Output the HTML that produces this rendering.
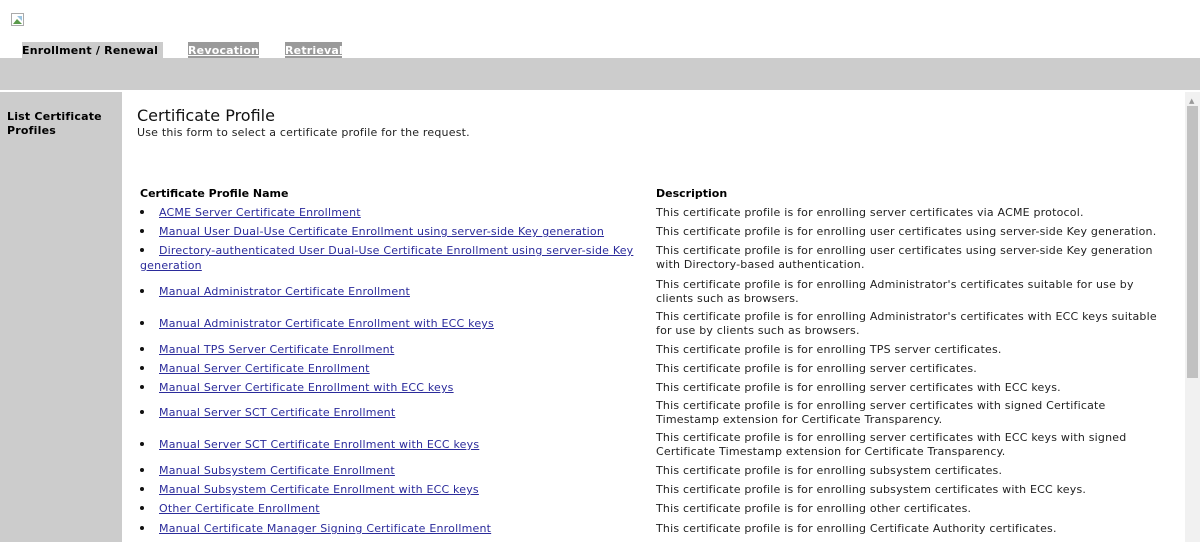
<!DOCTYPE html>
<html><head><meta charset="utf-8"><style>
*{margin:0;padding:0}
body{width:1200px;height:542px;overflow:hidden;background:#fff;font-family:"DejaVu Sans","Liberation Sans",sans-serif;font-size:11px;letter-spacing:0.2px;color:#222;position:relative}
.a{position:absolute;white-space:nowrap;line-height:13px}
a{color:#2b2b9b;text-decoration:underline}
.b{font-weight:bold;color:#000;letter-spacing:0}
.t{font-size:11px;letter-spacing:0.2px}
.dot{position:absolute;width:4px;height:4px;border-radius:50%;background:#111}
</style></head><body>
<svg class="a" style="left:11px;top:13px" width="14" height="14"><rect x="0.5" y="0.5" width="12" height="12" fill="#fff" stroke="#aaa"/><path d="M2 11 L6 6 L11 11Z" fill="#5a9a4a"/><path d="M6 3h5v5z" fill="#9bc4e0"/></svg>
<div class="a b t" style="left:22px;top:42px;width:141px;height:16px;background:#ccc;line-height:17px">Enrollment / Renewal</div>
<div class="a t" style="left:188px;top:42px;width:71px;height:16px;background:#9a9a9a;color:#fff;font-weight:bold;text-decoration:underline;line-height:17px;overflow:hidden">Revocation</div>
<div class="a t" style="left:285px;top:42px;width:57px;height:16px;background:#9a9a9a;color:#fff;font-weight:bold;text-decoration:underline;line-height:17px;overflow:hidden">Retrieval</div>
<div class="a" style="left:0;top:58px;width:1200px;height:32px;background:#ccc"></div>
<div class="a" style="left:0;top:92px;width:122px;height:450px;background:#ccc"></div>
<div class="a b t" style="left:7px;top:110px;line-height:14px">List Certificate<br>Profiles</div>
<div class="a" style="left:1185px;top:92px;width:15px;height:450px;background:#f1f1f1"></div>
<div class="a" style="left:1187px;top:106px;width:11px;height:272px;background:#c1c1c1"></div>
<div class="a" style="left:1189px;top:95px;color:#999;font-size:7px">▲</div>
<div class="a" style="left:137px;top:107px;font-size:16px;letter-spacing:0;color:#111;line-height:18px">Certificate Profile</div>
<div class="a" style="left:137px;top:126px">Use this form to select a certificate profile for the request.</div>
<div class="a b" style="left:140px;top:187px">Certificate Profile Name</div>
<div class="a b" style="left:656px;top:187px">Description</div>

<div class="dot" style="left:140px;top:210px"></div><div class="a" style="left:159px;top:206px"><a>ACME Server Certificate Enrollment</a></div>
<div class="a" style="left:656px;top:206px">This certificate profile is for enrolling server certificates via ACME protocol.</div>

<div class="dot" style="left:140px;top:229px"></div><div class="a" style="left:159px;top:225px"><a>Manual User Dual-Use Certificate Enrollment using server-side Key generation</a></div>
<div class="a" style="left:656px;top:225px">This certificate profile is for enrolling user certificates using server-side Key generation.</div>

<div class="dot" style="left:140px;top:248px"></div><div class="a" style="left:159px;top:244px"><a>Directory-authenticated User Dual-Use Certificate Enrollment using server-side Key</a></div>
<div class="a" style="left:140px;top:259px"><a>generation</a></div>
<div class="a" style="left:656px;top:244px">This certificate profile is for enrolling user certificates using server-side Key generation<br><span style="line-height:15px">with Directory-based authentication.</span></div>

<div class="dot" style="left:140px;top:289px"></div><div class="a" style="left:159px;top:285px"><a>Manual Administrator Certificate Enrollment</a></div>
<div class="a" style="left:656px;top:278px;line-height:14px">This certificate profile is for enrolling Administrator's certificates suitable for use by<br>clients such as browsers.</div>

<div class="dot" style="left:140px;top:321px"></div><div class="a" style="left:159px;top:317px"><a>Manual Administrator Certificate Enrollment with ECC keys</a></div>
<div class="a" style="left:656px;top:310px;line-height:14px">This certificate profile is for enrolling Administrator's certificates with ECC keys suitable<br>for use by clients such as browsers.</div>

<div class="dot" style="left:140px;top:347px"></div><div class="a" style="left:159px;top:343px"><a>Manual TPS Server Certificate Enrollment</a></div>
<div class="a" style="left:656px;top:343px">This certificate profile is for enrolling TPS server certificates.</div>

<div class="dot" style="left:140px;top:366px"></div><div class="a" style="left:159px;top:362px"><a>Manual Server Certificate Enrollment</a></div>
<div class="a" style="left:656px;top:362px">This certificate profile is for enrolling server certificates.</div>

<div class="dot" style="left:140px;top:385px"></div><div class="a" style="left:159px;top:381px"><a>Manual Server Certificate Enrollment with ECC keys</a></div>
<div class="a" style="left:656px;top:381px">This certificate profile is for enrolling server certificates with ECC keys.</div>

<div class="dot" style="left:140px;top:410px"></div><div class="a" style="left:159px;top:406px"><a>Manual Server SCT Certificate Enrollment</a></div>
<div class="a" style="left:656px;top:399px;line-height:14px">This certificate profile is for enrolling server certificates with signed Certificate<br>Timestamp extension for Certificate Transparency.</div>

<div class="dot" style="left:140px;top:442px"></div><div class="a" style="left:159px;top:438px"><a>Manual Server SCT Certificate Enrollment with ECC keys</a></div>
<div class="a" style="left:656px;top:431px;line-height:14px">This certificate profile is for enrolling server certificates with ECC keys with signed<br>Certificate Timestamp extension for Certificate Transparency.</div>

<div class="dot" style="left:140px;top:468px"></div><div class="a" style="left:159px;top:464px"><a>Manual Subsystem Certificate Enrollment</a></div>
<div class="a" style="left:656px;top:464px">This certificate profile is for enrolling subsystem certificates.</div>

<div class="dot" style="left:140px;top:487px"></div><div class="a" style="left:159px;top:483px"><a>Manual Subsystem Certificate Enrollment with ECC keys</a></div>
<div class="a" style="left:656px;top:483px">This certificate profile is for enrolling subsystem certificates with ECC keys.</div>

<div class="dot" style="left:140px;top:506px"></div><div class="a" style="left:159px;top:502px"><a>Other Certificate Enrollment</a></div>
<div class="a" style="left:656px;top:502px">This certificate profile is for enrolling other certificates.</div>

<div class="dot" style="left:140px;top:526px"></div><div class="a" style="left:159px;top:522px"><a>Manual Certificate Manager Signing Certificate Enrollment</a></div>
<div class="a" style="left:656px;top:522px">This certificate profile is for enrolling Certificate Authority certificates.</div>
</body></html>
